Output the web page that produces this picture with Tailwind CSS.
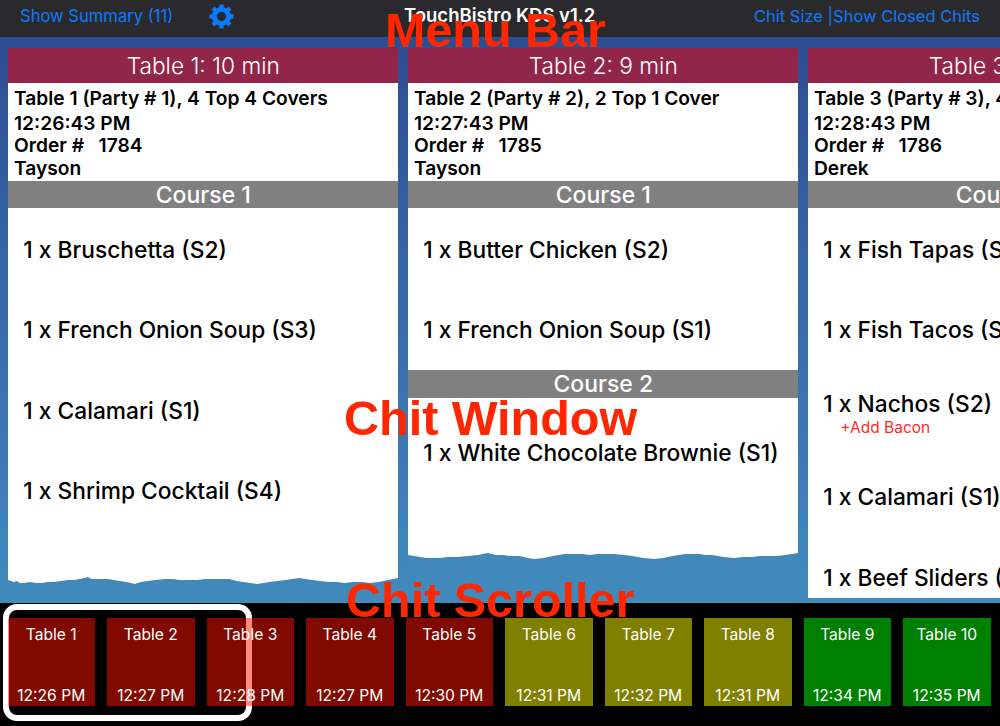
<!DOCTYPE html>
<html>
<head>
<meta charset="utf-8">
<script src="https://cdn.jsdelivr.net/npm/@tailwindcss/browser@4"></script>
</head>
<body class="bg-black">
<div class="relative w-[1000px] h-[726px] overflow-hidden bg-black font-[Inter,'Noto_Sans',sans-serif]">

  <!-- Menu bar -->
  <header class="relative h-[37px] bg-[#2a2a2c] flex items-center text-[#0a7aff] pb-[5px]">
    <span class="ml-[20px] w-[153px] whitespace-nowrap text-[16.6px]">Show Summary (11)</span>
    <svg class="ml-[36px] w-[25px] h-[25px]" viewBox="0 0 26 26" fill="#0a7aff">
      <circle cx="13" cy="13" r="7.4" fill="none" stroke="#0a7aff" stroke-width="5"/>
      <g>
        <rect x="10.8" y="0.5" width="4.4" height="5"/>
        <rect x="10.8" y="0.5" width="4.4" height="5" transform="rotate(45 13 13)"/>
        <rect x="10.8" y="0.5" width="4.4" height="5" transform="rotate(90 13 13)"/>
        <rect x="10.8" y="0.5" width="4.4" height="5" transform="rotate(135 13 13)"/>
        <rect x="10.8" y="0.5" width="4.4" height="5" transform="rotate(180 13 13)"/>
        <rect x="10.8" y="0.5" width="4.4" height="5" transform="rotate(225 13 13)"/>
        <rect x="10.8" y="0.5" width="4.4" height="5" transform="rotate(270 13 13)"/>
        <rect x="10.8" y="0.5" width="4.4" height="5" transform="rotate(315 13 13)"/>
      </g>
    </svg>
    <span class="ml-[170px] w-[191px] text-center text-white font-semibold text-[18.5px] whitespace-nowrap">TouchBistro KDS v1.2</span>
    <span class="ml-[159px] whitespace-nowrap text-[16.5px]">Chit Size |Show Closed Chits</span>
  </header>

  <!-- Chit window -->
  <main class="h-[566px] bg-linear-to-b from-[#2e4d91] to-[#428bbd] flex gap-[10px] pl-[8.3px] pt-[11px] items-start overflow-hidden">

    <!-- Chit 1 -->
    <article class="relative w-[390px] h-[539px] shrink-0 bg-white text-black">
      <div class="h-[35px] bg-[#92264a] text-white text-center text-[22.7px] font-light leading-[36px]">Table 1: 10 min</div>
      <div class="h-[98px] px-[5.7px] pt-[2px] text-[19.2px] font-semibold">
        <div class="leading-[26px]">Table 1 (Party # 1), 4 Top 4 Covers</div>
        <div class="leading-[24px]">12:26:43 PM</div>
        <div class="leading-[20px]">Order # &nbsp; 1784</div>
        <div class="leading-[26px]">Tayson</div>
      </div>
      <div class="h-[27px] bg-[#808080] text-white text-center text-[23px] font-medium leading-[29px]">Course 1</div>
      <ul class="pt-[2px] px-[15px] text-[22.75px] font-medium">
        <li class="h-[80.33px] flex items-center">1 x Bruschetta (S2)</li>
        <li class="h-[80.33px] flex items-center">1 x French Onion Soup (S3)</li>
        <li class="h-[80.33px] flex items-center">1 x Calamari (S1)</li>
        <li class="h-[80.33px] flex items-center">1 x Shrimp Cocktail (S4)</li>
      </ul>
      <svg class="absolute left-0 bottom-[-1px] w-[390px] h-[14px]" viewBox="0 0 391 14" preserveAspectRatio="none">
        <polygon fill="#4188bb" points="0,6 3,7 6,8 9,7 12,9 16,9 22,8 28,9 34,9 40,8 46,8 53,7 60,6 66,6 72,5 77,4 80,3 84,5 88,5 94,5 100,5 106,6 112,7 119,8 127,10 133,8 140,7 148,6 157,5 165,5 172,6 181,6 190,6 198,5 207,5 214,5 222,5 229,7 236,8 243,9 250,10 256,9 262,8 270,7 278,6 285,5 292,4 298,5 305,6 313,7 322,8 330,8 337,9 346,8 355,8 363,9 372,8 381,6 391,4 391,15 0,15"/>
      </svg>
    </article>

    <!-- Chit 2 -->
    <article class="relative w-[390px] h-[515px] shrink-0 bg-white text-black">
      <div class="h-[35px] bg-[#92264a] text-white text-center text-[22.7px] font-light leading-[36px]">Table 2: 9 min</div>
      <div class="h-[98px] px-[5.7px] pt-[2px] text-[19.2px] font-semibold">
        <div class="leading-[26px]">Table 2 (Party # 2), 2 Top 1 Cover</div>
        <div class="leading-[24px]">12:27:43 PM</div>
        <div class="leading-[20px]">Order # &nbsp; 1785</div>
        <div class="leading-[26px]">Tayson</div>
      </div>
      <div class="h-[27px] bg-[#808080] text-white text-center text-[23px] font-medium leading-[29px]">Course 1</div>
      <ul class="pt-[2px] px-[15px] text-[22.75px] font-medium">
        <li class="h-[80px] flex items-center">1 x Butter Chicken (S2)</li>
        <li class="h-[80px] flex items-center">1 x French Onion Soup (S1)</li>
      </ul>
      <div class="h-[28px] bg-[#808080] text-white text-center text-[23px] font-medium leading-[29px]">Course 2</div>
      <ul class="pt-[15px] px-[15px] text-[22.75px] font-medium">
        <li class="h-[80px] flex items-center whitespace-nowrap">1 x White Chocolate Brownie (S1)</li>
      </ul>
      <svg class="absolute left-0 bottom-[-1px] w-[390px] h-[14px]" viewBox="0 0 391 14" preserveAspectRatio="none">
        <polygon fill="#4188bb" points="0,5 6,6 12,7 18,8 24,8 32,8 40,7 50,7 60,6 70,5 80,3 88,5 95,5 103,6 112,6 120,8 127,9 136,8 145,6 151,5 157,4 166,4 175,4 182,5 190,4 198,4 207,4 216,5 225,6 236,8 247,9 256,8 265,6 272,5 278,4 285,4 292,4 298,5 305,5 316,7 327,8 336,7 345,7 353,6 362,6 370,6 378,5 385,4 391,3 391,15 0,15"/>
      </svg>
    </article>

    <!-- Chit 3 -->
    <article class="relative w-[390px] h-[550px] shrink-0 overflow-hidden bg-white text-black">
      <div class="h-[35px] bg-[#92264a] text-white text-center text-[22.7px] font-light leading-[36px] whitespace-nowrap">Table 3: 8 min</div>
      <div class="h-[98px] px-[5.7px] pt-[2px] text-[19.2px] font-semibold whitespace-nowrap">
        <div class="leading-[26px]">Table 3 (Party # 3), 4 Top 4 Covers</div>
        <div class="leading-[24px]">12:28:43 PM</div>
        <div class="leading-[20px]">Order # &nbsp; 1786</div>
        <div class="leading-[26px]">Derek</div>
      </div>
      <div class="h-[27px] bg-[#808080] text-white text-center text-[23px] font-medium leading-[29px]">Course 1</div>
      <ul class="pt-[2px] px-[15px] text-[22.75px] font-medium whitespace-nowrap">
        <li class="h-[80px] flex items-center">1 x Fish Tapas (S2)</li>
        <li class="h-[80px] flex items-center">1 x Fish Tacos (S3)</li>
        <li class="h-[87px] pt-[20px]">
          <div class="leading-[28px]">1 x Nachos (S2)</div>
          <div class="ml-[17px] text-[15.5px] font-normal text-[#ff2a1f] leading-[20px]">+Add Bacon</div>
        </li>
        <li class="h-[80.5px] flex items-center">1 x Calamari (S1)</li>
        <li class="h-[80.5px] flex items-center">1 x Beef Sliders (S4)</li>
      </ul>
    </article>
  </main>

  <!-- Chit scroller -->
  <footer class="relative h-[123px] bg-black pt-[15px] pl-[7.5px] flex gap-[12px] text-white">
    <div class="absolute left-[3px] top-[1px] w-[249px] h-[117px] rounded-[14px] border-[6px] border-white"></div>
    <div class="relative w-[87.5px] h-[88px] bg-[#ff1400]/50 flex flex-col justify-between items-center pt-[7px] text-[15.6px] leading-[20px]"><span>Table 1</span><span>12:26 PM</span></div>
    <div class="relative w-[87.5px] h-[88px] bg-[#ff1400]/50 flex flex-col justify-between items-center pt-[7px] text-[15.6px] leading-[20px]"><span>Table 2</span><span>12:27 PM</span></div>
    <div class="relative w-[87.5px] h-[88px] bg-[#ff1400]/50 flex flex-col justify-between items-center pt-[7px] text-[15.6px] leading-[20px]"><span>Table 3</span><span>12:28 PM</span></div>
    <div class="relative w-[87.5px] h-[88px] bg-[#ff1400]/50 flex flex-col justify-between items-center pt-[7px] text-[15.6px] leading-[20px]"><span>Table 4</span><span>12:27 PM</span></div>
    <div class="relative w-[87.5px] h-[88px] bg-[#ff1400]/50 flex flex-col justify-between items-center pt-[7px] text-[15.6px] leading-[20px]"><span>Table 5</span><span>12:30 PM</span></div>
    <div class="relative w-[87.5px] h-[88px] bg-[#ffff00]/50 flex flex-col justify-between items-center pt-[7px] text-[15.6px] leading-[20px]"><span>Table 6</span><span>12:31 PM</span></div>
    <div class="relative w-[87.5px] h-[88px] bg-[#ffff00]/50 flex flex-col justify-between items-center pt-[7px] text-[15.6px] leading-[20px]"><span>Table 7</span><span>12:32 PM</span></div>
    <div class="relative w-[87.5px] h-[88px] bg-[#ffff00]/50 flex flex-col justify-between items-center pt-[7px] text-[15.6px] leading-[20px]"><span>Table 8</span><span>12:31 PM</span></div>
    <div class="relative w-[87.5px] h-[88px] bg-[#00ff00]/50 flex flex-col justify-between items-center pt-[7px] text-[15.6px] leading-[20px]"><span>Table 9</span><span>12:34 PM</span></div>
    <div class="relative w-[87.5px] h-[88px] bg-[#00ff00]/50 flex flex-col justify-between items-center pt-[7px] text-[15.6px] leading-[20px]"><span>Table 10</span><span>12:35 PM</span></div>
  </footer>

  <!-- Red annotations over the screenshot -->
  <div class="absolute left-[385px] top-[2px] text-[48.5px] leading-[56px] font-bold text-[#ff2600] whitespace-nowrap font-['Liberation_Sans',sans-serif]">Menu Bar</div>
  <div class="absolute left-[344px] top-[390px] text-[48.5px] leading-[56px] font-bold text-[#ff2600] whitespace-nowrap font-['Liberation_Sans',sans-serif]">Chit Window</div>
  <div class="absolute left-[346px] top-[572px] text-[48.5px] leading-[56px] font-bold text-[#ff2600] whitespace-nowrap font-['Liberation_Sans',sans-serif]">Chit Scroller</div>
</div>
</body>
</html>
